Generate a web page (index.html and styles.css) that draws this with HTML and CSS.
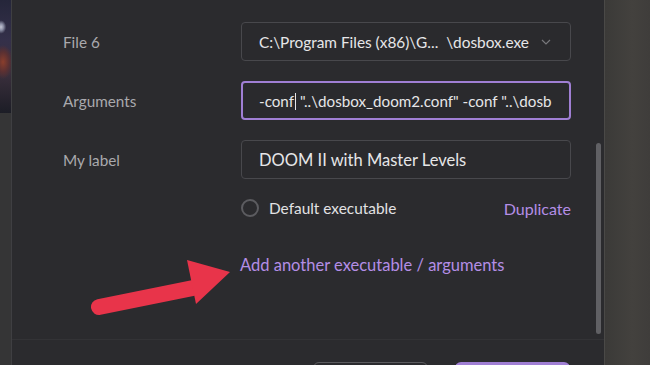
FILE: index.html
```html
<!DOCTYPE html>
<html>
<head>
<meta charset="utf-8">
<link rel="stylesheet" href="styles.css">
</head>
<body>
<div class="screen">
  <div class="left-strip">
    <div class="thumb-img"></div>
  </div>
  <div class="dialog">
    <div class="dialog-main">
      <div class="form">
        <div class="row">
          <div class="label">File 6</div>
          <div class="field">
            <span class="field-text path">C:\Program Files (x86)\G...&nbsp;&nbsp;\dosbox.exe</span>
            <svg class="chevron" width="10" height="6" viewBox="0 0 10 6"><path d="M1 1 L5 5 L9 1" fill="none" stroke="#77777b" stroke-width="1.2"/></svg>
          </div>
        </div>
        <div class="row">
          <div class="label">Arguments</div>
          <div class="field focused">
            <span class="field-text args">-conf<span class="caret"></span> "..\dosbox_doom2.conf" -conf "..\dosb</span>
          </div>
        </div>
        <div class="row">
          <div class="label">My label</div>
          <div class="field">
            <span class="field-text title">DOOM II with Master Levels</span>
          </div>
        </div>
        <div class="row options">
          <div class="label"></div>
          <div class="option-line">
            <div class="radio-wrap"><span class="radio"></span><span class="radio-label">Default executable</span></div>
            <span class="link">Duplicate</span>
          </div>
        </div>
        <div class="row add">
          <div class="label"></div>
          <span class="link big">Add another executable / arguments</span>
        </div>
      </div>
      <div class="scroll-track"><div class="scroll-thumb"></div></div>
    </div>
    <div class="footer">
      <div class="btn outline"></div>
      <div class="btn primary"></div>
    </div>
    <svg class="arrow" width="160" height="60" viewBox="0 0 160 60">
      <path d="M9 47 L108 27" stroke="#e8344a" stroke-width="16" stroke-linecap="round" fill="none"/>
      <polygon points="97,0 140,12 106,44" fill="#e8344a"/>
    </svg>
  </div>
  <div class="right-strip"></div>
</div>
</body>
</html>
```
FILE: styles.css
```css
* { box-sizing: border-box; }
html, body {
  margin: 0;
  padding: 0;
  width: 650px;
  height: 365px;
  overflow: hidden;
  background: #2b2b2e;
  font-family: Lato, "Open Sans", sans-serif;
}
.screen {
  display: flex;
  width: 650px;
  height: 365px;
}
.left-strip {
  width: 12px;
  flex: none;
  background: #353536;
  border-right: 1px solid #3f3f42;
}
.thumb-img {
  height: 113px;
  background:
    radial-gradient(ellipse 7px 9px at 1px 27px, #c3c5d3 0%, #8a8da3 35%, transparent 75%),
    radial-gradient(ellipse 12px 20px at 3px 62px, #8a3e2c 0%, #5a3032 50%, transparent 85%),
    linear-gradient(180deg, #25263a 0%, #34304a 35%, #3a2f3c 65%, #1c1d26 100%);
}
.dialog {
  position: relative;
  width: 593px;
  flex: none;
  display: flex;
  flex-direction: column;
  background: #2b2b2e;
  border-right: 1px solid #4a4947;
}
.dialog-main {
  display: flex;
  height: 340px;
  flex: none;
  border-bottom: 1px solid #333336;
}
.form {
  flex: 1;
  padding: 22px 0 0 51px;
}
.row {
  display: grid;
  grid-template-columns: 178px 330px;
  align-items: center;
  margin-bottom: 20px;
}
.label {
  color: #a9a9ad;
  font-size: 15.3px;
}
.field {
  height: 39px;
  border: 1px solid #48484c;
  border-radius: 4px;
  background: #2a2a2d;
  display: flex;
  align-items: center;
  padding: 0 0 0 17px;
  overflow: hidden;
  position: relative;
}
.field.focused {
  border: 2px solid #a07fd4;
  padding-left: 16px;
}
.field-text {
  color: #e6e6e8;
  font-size: 15.4px;
  white-space: nowrap;
}
.field-text.args {
  font-size: 15.2px;
}
.field-text.title {
  font-size: 16.5px;
}
.caret {
  display: inline-block;
  width: 1px;
  height: 17px;
  background: #e6e6e8;
  vertical-align: -3px;
  margin-left: 1px;
}
.chevron {
  margin-left: 12px;
}
.options {
  margin-top: -2px;
  margin-bottom: 0;
}
.option-line {
  display: flex;
  justify-content: space-between;
  align-items: center;
  height: 22px;
}
.radio-wrap {
  display: flex;
  align-items: center;
}
.radio {
  width: 18px;
  height: 18px;
  border: 2px solid #5c5c60;
  border-radius: 50%;
  margin-right: 10px;
}
.radio-label {
  color: #e2e2e4;
  font-size: 15.4px;
}
.link {
  color: #b48ee6;
  font-size: 16px;
}
.link.big {
  font-size: 16.5px;
}
.add {
  margin-top: 36px;
}
.add .link {
  margin-left: -1px;
}
.scroll-track {
  width: 10px;
  flex: none;
  padding-top: 143px;
  padding-left: 2px;
}
.scroll-thumb {
  width: 5px;
  height: 191px;
  border-radius: 3px;
  background: #606064;
}
.footer {
  flex: 1;
  display: flex;
  padding: 22px 0 0 301px;
  gap: 27px;
}
.btn {
  width: 115px;
  height: 30px;
  border-radius: 6px;
  flex: none;
}
.btn.outline {
  border: 1px solid #5a5a5e;
}
.btn.primary {
  background: #a07fd4;
}
.arrow {
  position: absolute;
  left: 78px;
  top: 260px;
}
.right-strip {
  flex: 1;
  background: linear-gradient(90deg, #3b3a38 0%, #43413e 60%, #3f3d3b 100%);
}
```
